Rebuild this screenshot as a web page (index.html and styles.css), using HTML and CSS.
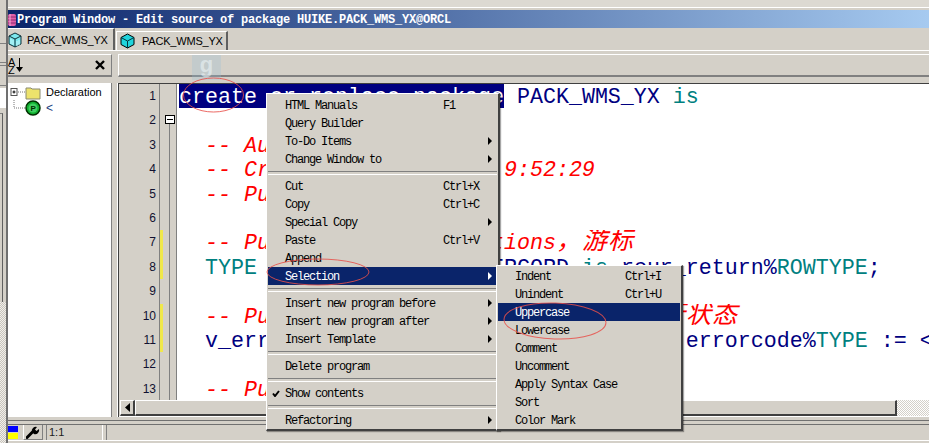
FILE: index.html
```html
<!DOCTYPE html>
<html lang="en">
<head>
<meta charset="utf-8">
<title>Program Window</title>
<link rel="stylesheet" href="styles.css">
</head>
<body>
<div class="page">
  <aside class="side">
    <div class="side-a"></div>
    <div class="side-b"></div>
    <div class="side-b side-c"></div>
    <div class="side-w"></div>
    <div class="side-d"></div>
    <div class="side-h"></div>
  </aside>
  <main class="win">
    <div class="wintop"></div>
    <div class="title">
      <svg class="title-ico" width="8" height="14" viewBox="0 0 8 14"><rect x="0" y="1" width="8" height="12" rx="2" fill="#e060a8"/><path d="M0 4h8M0 7h8M0 10h8" stroke="#8a2a70"/><path d="M2 1v12" stroke="#f4b0d8"/></svg>
      <span class="title-text">Program Window - Edit source of package HUIKE.PACK_WMS_YX@ORCL</span>
    </div>
    <div class="tabs">
      <div class="tab tab-on">
        <svg class="cube" width="15" height="16" viewBox="0 0 15 16"><path d="M7 1l6 3v8l-6 3-6-3V4z" fill="#7ce8ee" stroke="#103038"/><path d="M1 4l6 3 6-3M7 7v8" fill="none" stroke="#103038"/><path d="M3 7v5M5 8v5M9 9v5M11 8v5" stroke="#c8f8fa"/></svg>
        <span>PACK_WMS_YX</span>
      </div>
      <div class="tab tab-off">
        <svg class="cube" width="15" height="16" viewBox="0 0 15 16"><path d="M7.500 1l6.500 3.500v7L7.500 15 1 11.500v-7z" fill="#20d4dc" stroke="#000"/><path d="M1 4.500l6.500 3.500L14 4.500M7.500 8v7" fill="none" stroke="#003840"/></svg>
        <span>PACK_WMS_YX</span>
      </div>
    </div>
    <div class="work">
      <div class="bar bar-left">
        <span class="sort"><span class="az">A<br>Z</span><svg width="7" height="15" viewBox="0 0 7 15"><path d="M3.500 0v11" stroke="#000"/><path d="M0 9h7l-3.500 5z" fill="#000"/></svg></span>
        <svg class="close" width="10" height="10" viewBox="0 0 10 10"><path d="M1 1l8 8M9 1l-8 8" stroke="#000" stroke-width="2.400"/></svg>
      </div>
      <div class="bar bar-right"></div>
      <div class="tree">
        <div class="node">
          <svg width="38" height="16" viewBox="0 0 38 16"><rect x="3" y="4.500" width="6" height="7" fill="#fff" stroke="#555"/><path d="M4.500 8h3M6 6.500v3" stroke="#000"/><path d="M10 8h8" stroke="#777" stroke-dasharray="1 1"/><path d="M18 4h5l1 1h8v10H18z" fill="#ece26c" stroke="#8a8a70"/></svg>
          <span>Declaration</span>
        </div>
        <div class="node">
          <svg width="38" height="16" viewBox="0 0 38 16"><path d="M6 0v8h11" fill="none" stroke="#777" stroke-dasharray="1 1"/><circle cx="25" cy="8" r="7" fill="#10b030" stroke="#003000" stroke-width="1.500"/><circle cx="25" cy="8" r="4.500" fill="#40d060"/><text x="22.500" y="11" class="node-p">P</text></svg>
          <span class="lt">&lt;</span>
        </div>
      </div>
      <div class="editor">
        <div class="rows">
          <div class="row"><div class="ln">1</div><div class="mk"></div><div class="code"><span class="sel">create or replace package</span> PACK_WMS_YX <span class="k">is</span></div></div>
          <div class="row"><div class="ln">2</div><div class="mk mk-fold"><span class="fold"></span></div><div class="code"></div></div>
          <div class="row"><div class="ln">3</div><div class="mk mk-line"></div><div class="code c">  -- Author  : HUIKE</div></div>
          <div class="row"><div class="ln">4</div><div class="mk mk-line"></div><div class="code c">  -- Created : 2011-10-1 9:52:29</div></div>
          <div class="row"><div class="ln">5</div><div class="mk mk-line"></div><div class="code c">  -- Purpose : WMS</div></div>
          <div class="row"><div class="ln">6</div><div class="mk mk-line"></div><div class="code"></div></div>
          <div class="row"><div class="ln">7</div><div class="mk mk-line mk-y"></div><div class="code c">  -- Public type declarations<span class="cjk">，游标</span></div></div>
          <div class="row"><div class="ln">8</div><div class="mk mk-line mk-y"></div><div class="code">  <span class="k">TYPE</span> t_wms_yx_cur_tab_ERCORD <span class="k">is</span> rcur_return%<span class="k">ROWTYPE</span>;</div></div>
          <div class="row"><div class="ln">9</div><div class="mk mk-line"></div><div class="code"></div></div>
          <div class="row"><div class="ln">10</div><div class="mk mk-line mk-y"></div><div class="code c">  -- Public variable declarations<span class="cjk">，执行状态</span></div></div>
          <div class="row"><div class="ln">11</div><div class="mk mk-line mk-y"></div><div class="code">  v_errorcode  t_pack_wms_yx_errorcode.errorcode%<span class="k">TYPE</span> := &lt;</div></div>
          <div class="row"><div class="ln">12</div><div class="mk mk-line"></div><div class="code"></div></div>
          <div class="row"><div class="ln">13</div><div class="mk mk-line"></div><div class="code c">  -- Public function and procedure</div></div>
        </div>
        <div class="hscroll">
          <div class="sb-btn"><svg width="5" height="9" viewBox="0 0 5 9"><path d="M5 0v9L0 4.500z" fill="#000"/></svg></div>
          <div class="sb-thumb"></div>
          <div class="sb-track"></div>
        </div>
      </div>
    </div>
    <div class="status">
      <div class="cells">
        <div class="swatch"><i class="sw-b"></i><i class="sw-y"></i></div>
        <div class="tool"><svg width="14" height="13" viewBox="0 0 14 13"><path d="M1 11.500l6-6" stroke="#000" stroke-width="3" stroke-linecap="round"/><path d="M6 6a4 4 0 0 1 5-5L9 3.500l1.500 1.500L13 3a4 4 0 0 1-5 5z" fill="#000"/></svg></div>
        <div class="cell cell-pos">1:1</div>
        <div class="cell cell-rest"></div>
      </div>
    </div>
  </main>

  <div class="mark">g</div>

  <div class="menu menu-main">
    <div class="item"><span class="lbl">HTML Manuals</span><span>F1</span></div>
    <div class="item"><span class="lbl">Query Builder</span></div>
    <div class="item sub"><span class="lbl">To-Do Items</span></div>
    <div class="item sub"><span class="lbl">Change Window to</span></div>
    <div class="sep"></div>
    <div class="item"><span class="lbl">Cut</span><span>Ctrl+X</span></div>
    <div class="item"><span class="lbl">Copy</span><span>Ctrl+C</span></div>
    <div class="item sub"><span class="lbl">Special Copy</span></div>
    <div class="item"><span class="lbl">Paste</span><span>Ctrl+V</span></div>
    <div class="item"><span class="lbl">Append</span></div>
    <div class="item sub hot"><span class="lbl">Selection</span></div>
    <div class="sep"></div>
    <div class="item sub"><span class="lbl">Insert new program before</span></div>
    <div class="item sub"><span class="lbl">Insert new program after</span></div>
    <div class="item sub"><span class="lbl">Insert Template</span></div>
    <div class="sep"></div>
    <div class="item"><span class="lbl">Delete program</span></div>
    <div class="sep"></div>
    <div class="item"><svg class="check" width="8" height="7" viewBox="0 0 8 7"><path d="M1 3.500l2 2.500 4-5" fill="none" stroke="#000" stroke-width="2"/></svg><span class="lbl">Show contents</span></div>
    <div class="sep"></div>
    <div class="item sub"><span class="lbl">Refactoring</span></div>
  </div>

  <div class="menu menu-sub">
    <div class="item"><span class="lbl">Indent</span><span>Ctrl+I</span></div>
    <div class="item"><span class="lbl">Unindent</span><span>Ctrl+U</span></div>
    <div class="item hot"><span class="lbl">Uppercase</span></div>
    <div class="item"><span class="lbl">Lowercase</span></div>
    <div class="item"><span class="lbl">Comment</span></div>
    <div class="item"><span class="lbl">Uncomment</span></div>
    <div class="item"><span class="lbl">Apply Syntax Case</span></div>
    <div class="item"><span class="lbl">Sort</span></div>
    <div class="item"><span class="lbl">Color Mark</span></div>
  </div>

  <svg class="rings" width="929" height="443" viewBox="0 0 929 443">
    <ellipse cx="213.500" cy="95" rx="30" ry="17"/>
    <ellipse cx="318" cy="272" rx="51" ry="13"/>
    <ellipse cx="555" cy="321" rx="51" ry="18" transform="rotate(2 555 321)"/>
  </svg>
</div>
</body>
</html>
```
FILE: styles.css
```css
* { box-sizing: border-box; }
html, body { margin: 0; padding: 0; }
body { background: #d4d0c8; font-family: "Liberation Sans", Arial, sans-serif; }
.page { position: relative; width: 929px; height: 443px; overflow: hidden; display: flex; background: #d4d0c8; }

.side { width: 8px; flex: none; display: flex; flex-direction: column; border-right: 2px solid #707070; }
.side > div { flex: none; }
.side-a { height: 43px; }
.side-b { height: 20px; border-top: 1px solid #808080; border-bottom: 1px solid #808080; }
.side-c { height: 21px; margin-top: 2px; }
.side-w { height: 20px; margin-top: 2px; background: #fff; }
.side-d { height: 189px; width: 3px; margin-top: 5px; border-right: 1px solid #606060; border-top: 1px solid #808080; }
.side > .side-h { flex: 1; background: repeating-conic-gradient(#c8c4bc 0 25%, #f0eeea 0 50%) 0 0 / 2px 2px; }

.win { flex: 1; min-width: 0; display: flex; flex-direction: column; }
.win > div { flex: none; }
.wintop { height: 10px; background: #dcd9d2; box-shadow: inset 0 -2px 0 #d4d0c8, inset 0 -3px 0 #fff; }

.title { height: 18px; display: flex; align-items: center; padding-top: 1px; background: linear-gradient(90deg, #0a246a, #a6caf0); }
.title-ico { margin-right: 1px; flex: none; }
.title-text { color: #fff; font: bold 12px "Liberation Mono", monospace; letter-spacing: -0.2px; white-space: pre; }

.tabs { height: 22px; display: flex; align-items: flex-end; }
.tab { display: flex; align-items: center; font-size: 11px; letter-spacing: -0.2px; color: #000; background: #d4d0c8; border-top: 1px solid #fff; border-right: 2px solid #606060; }
.tab-on { width: 107px; height: 22px; }
.tab-off { width: 112px; height: 19px; margin-left: 1px; padding-left: 3px; border-left: 1px solid #fff; }
.tab-on .cube { margin: 0 4px 0 0; }
.tab-off .cube { margin-right: 7px; }

.work { display: grid; grid-template-columns: 104px 811px; grid-template-rows: 23px 334px; column-gap: 6px; row-gap: 6px; padding-top: 3px; border-top: 1px solid #fff; }
.bar { border-top: 1px solid #fff; border-left: 1px solid #fff; border-right: 1px solid #808080; border-bottom: 2px solid #808080; }
.bar-left { display: flex; align-items: center; justify-content: space-between; padding-right: 6px; border-left: 0; }
.bar-right { border-right: 0; }
.sort { display: flex; align-items: center; }
.az { display: block; font: 11px/8px "Liberation Sans", sans-serif; width: 8px; padding-top: 1px; }
.close { display: block; }

.tree { background: #fff; border-right: 1px solid #808080; padding-top: 1px; font-size: 11px; }
.node { display: flex; align-items: center; height: 16px; }
.node svg { flex: none; }
.node-p { font: bold 8px "Liberation Sans", sans-serif; fill: #003000; }
.lt { color: #204080; font-size: 12px; }

.editor { display: flex; flex-direction: column; border-top: 1px solid #404040; border-left: 1px solid #404040; box-shadow: -1px 0 0 #fff; background: #fff; overflow: hidden; }
.rows { height: 316px; overflow: hidden; flex: none; }
.row { display: flex; height: 24.4px; }
.ln { width: 41px; flex: none; padding-right: 3px; background: #d4d0c8; border-right: 1px solid #808080; font-size: 12px; line-height: 24.4px; text-align: right; color: #101030; }
.mk { position: relative; width: 17px; flex: none; background: #d4d0c8; border-right: 1px solid #808080; }
.mk-line::before { content: ""; position: absolute; left: 9px; top: 0; bottom: 0; width: 1px; background: #808080; }
.mk-fold::before { content: ""; position: absolute; left: 9px; top: 12px; bottom: 0; width: 1px; background: #808080; }
.mk-y::after { content: ""; position: absolute; left: 0; top: 0; bottom: 0; width: 3px; background: #f0e84a; }
.fold { position: absolute; left: 5px; top: 7px; width: 10px; height: 9px; background: #fff; border: 1px solid #000; z-index: 1; }
.fold::after { content: ""; position: absolute; left: 1px; right: 1px; top: 3px; height: 1px; background: #000; }
.code { flex: 1; min-width: 0; padding-left: 2px; white-space: pre; overflow: hidden; font: 21.667px/28.4px "Liberation Mono", "Noto Sans CJK SC", monospace; color: #000080; }
.k { color: #008080; }
.c { color: #ff0000; font-style: italic; }
.cjk { font-family: "Noto Sans CJK SC", sans-serif; font-size: 25px; line-height: 0; letter-spacing: 1px; }
.sel { display: inline-block; height: 24.4px; vertical-align: top; background: #000080; color: #fff; }

.hscroll { height: 16px; flex: none; display: flex; padding-left: 1px; background: #d4d0c8; }
.sb-btn { width: 15px; display: flex; align-items: center; justify-content: center; border-top: 1px solid #fff; border-left: 1px solid #fff; border-right: 2px solid #404040; border-bottom: 2px solid #404040; }
.sb-thumb { width: 762px; flex: none; border-top: 1px solid #fff; border-left: 1px solid #fff; border-right: 2px solid #404040; border-bottom: 2px solid #404040; }
.sb-track { flex: 1; background: repeating-conic-gradient(#d4d0c8 0 25%, #fff 0 50%) 0 0 / 2px 2px; }

.status { height: 23px; margin-top: 3px; border-top: 1px solid #707070; padding-top: 3px; }
.cells { display: flex; height: 17px; border-top: 1px solid #707070; border-bottom: 1px solid #fff; }
.swatch { width: 10px; display: flex; flex-direction: column; gap: 1px; padding-top: 1px; }
.swatch i { display: block; height: 6px; }
.sw-b { background: #0000ff; }
.sw-y { background: #ffff00; }
.tool { width: 20px; margin-left: 5px; display: flex; align-items: center; justify-content: center; border-left: 1px solid #fff; border-right: 1px solid #808080; border-bottom: 1px solid #808080; }
.cell { margin-left: 3px; border-left: 1px solid #808080; border-right: 1px solid #fff; font-size: 11px; line-height: 15px; padding-left: 2px; color: #202020; }
.cell-pos { width: 57px; }
.cell-rest { flex: 1; border-right: 0; }

.mark { position: absolute; left: 192px; top: 55px; width: 29px; height: 25px; background: rgba(150, 190, 215, 0.28); color: rgba(240, 248, 250, 0.55); font: bold 22px/20px "Liberation Sans", sans-serif; text-align: center; }

.menu { position: absolute; background: #d4d0c8; border-top: 1px solid #fff; border-left: 1px solid #fff; border-right: 2px solid #404040; border-bottom: 2px solid #404040; box-shadow: 1px 1px 1px rgba(0, 0, 0, 0.35); font: 12px/20px "Liberation Mono", monospace; letter-spacing: -1.2px; color: #000; }
.menu-main { left: 266px; top: 93px; width: 234px; height: 338px; padding: 2px 1px 0 1px; }
.menu-sub { left: 496px; top: 265px; width: 187px; height: 166px; padding: 1px 1px 0 1px; }
.item { position: relative; display: flex; height: 18px; padding-left: 17px; white-space: pre; }
.menu-main .lbl { width: 158px; flex: none; }
.menu-sub .lbl { width: 110px; flex: none; }
.hot { background: #0a246a; color: #fff; }
.sub::after { content: ""; position: absolute; left: 220px; top: 5px; border-left: 4px solid currentColor; border-top: 4px solid transparent; border-bottom: 4px solid transparent; }
.sep { height: 9px; padding-top: 3px; }
.sep::before { content: ""; display: block; height: 2px; border-top: 1px solid #808080; border-bottom: 1px solid #fff; }
.check { position: absolute; left: 4px; top: 6px; }

.rings { position: absolute; left: 0; top: 0; pointer-events: none; }
.rings ellipse { fill: none; stroke: #e8504a; stroke-width: 1; opacity: 0.85; }
```
